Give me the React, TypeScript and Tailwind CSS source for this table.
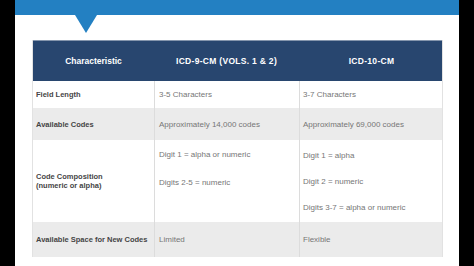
import React from 'react';

const rows = [
  { label: ['Field Length'], icd9: ['3-5 Characters'], icd10: ['3-7 Characters'], h: 'h-[27px]', shade: false, top: false },
  { label: ['Available Codes'], icd9: ['Approximately 14,000 codes'], icd10: ['Approximately 69,000 codes'], h: 'h-[32px]', shade: true, top: false },
  {
    label: ['Code Composition', '(numeric or alpha)'],
    icd9: ['Digit 1 = alpha or numeric', 'Digits 2-5 = numeric'],
    icd10: ['Digit 1 = alpha', 'Digit 2 = numeric', 'Digits 3-7 = alpha or numeric'],
    h: 'h-[82px]',
    shade: false,
    top: true,
  },
  { label: ['Available Space for New Codes'], icd9: ['Limited'], icd10: ['Flexible'], h: 'h-[35px]', shade: true, top: false },
];

export default function App() {
  return (
    <div className="flex w-[474px] h-[266px] bg-black overflow-hidden" style={{ fontFamily: '"Liberation Sans", Arial, sans-serif' }}>
      <div className="w-[15px] shrink-0 bg-black" />
      <div className="flex-1 bg-white flex flex-col">
        {/* top banner with pointer */}
        <div className="h-[15px] bg-[#2380c2]" />
        <svg className="ml-[60px] block" width="22" height="18" viewBox="0 0 22 18">
          <polygon points="0,0 22,0 11,18" fill="#2380c2" />
        </svg>

        <div className="ml-[17px] mt-[7px] w-[411px] border-x border-[#e2e2e2]">
          {/* header */}
          <div className="grid grid-cols-[121px_145px_145px] h-[41px] bg-[#28466f] border-t border-[#8596ad] text-white font-bold text-[8.5px]">
            <div className="flex items-center justify-center">Characteristic</div>
            <div className="flex items-center justify-center tracking-[0.3px]">ICD-9-CM (VOLS. 1 &amp; 2)</div>
            <div className="flex items-center justify-center tracking-[0.3px]">ICD-10-CM</div>
          </div>

          {rows.map((r, i) => (
            <div
              key={i}
              className={`grid grid-cols-[121px_145px_145px] ${r.h} ${r.shade ? 'bg-[#ebebeb]' : 'bg-white'}`}
            >
              <div className="flex flex-col justify-center pl-[3px] text-[7.5px] font-bold text-[#454545] leading-[9px]">
                {r.label.map((t) => (
                  <span key={t}>{t}</span>
                ))}
              </div>
              <div
                className={`flex flex-col gap-[19px] pl-[4px] border-l border-[#dcdcdc] text-[8px] text-[#767676] leading-[9px] ${
                  r.top ? 'justify-start pt-[10px]' : 'justify-center'
                }`}
              >
                {r.icd9.map((t) => (
                  <span key={t}>{t}</span>
                ))}
              </div>
              <div className="flex flex-col justify-center gap-[17px] pl-[3px] border-l border-[#dcdcdc] text-[8px] text-[#767676] leading-[9px]">
                {r.icd10.map((t) => (
                  <span key={t}>{t}</span>
                ))}
              </div>
            </div>
          ))}
        </div>
      </div>
      <div className="w-[15px] shrink-0 bg-black" />
    </div>
  );
}
